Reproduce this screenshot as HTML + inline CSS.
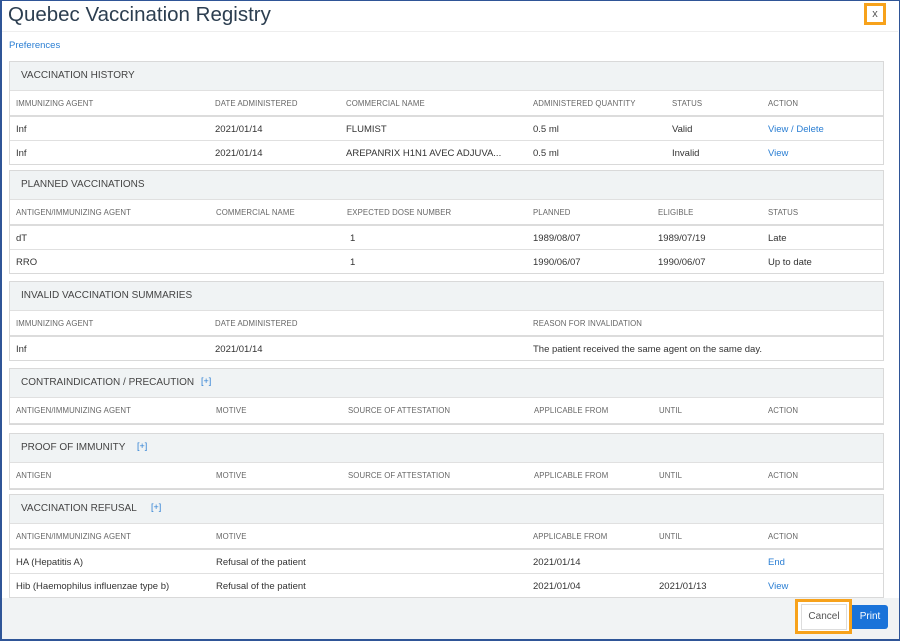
<!DOCTYPE html>
<html><head><meta charset="utf-8"><style>
*{margin:0;padding:0;box-sizing:border-box}
body{width:900px;height:641px;overflow:hidden;background:#fff;font-family:"Liberation Sans",Arial,sans-serif;position:relative;color:#333}
.frame{position:absolute;left:0;top:0;width:900px;height:641px;border:2px solid #2f5597;border-right-width:1px;border-top-width:1px}
.t{position:absolute;white-space:nowrap}
.title{left:8px;top:3px;font-size:20.5px;color:#2c3e50}
.hl{position:absolute;left:2px;right:2px;top:31px;height:1px;background:#eee}
.pref{left:9px;top:40px;font-size:9.5px;color:#2a7ed3}
.x{position:absolute;left:864px;top:3px;width:22px;height:22px;border:3px solid #f7a21b;font-size:11px;color:#555;text-align:center;line-height:16px}
.sec{position:absolute;left:9px;width:875px;border:1px solid #d9d9d9}
.sh{position:absolute;left:0;right:0;top:0;height:29px;background:#f0f3f4;border-bottom:1px solid #e0e0e0}
.sh span{position:absolute;left:11px;top:8px;font-size:10px;color:#444}
.sh b{position:absolute;top:7px;font-weight:normal;font-size:9px;color:#2a7ed3}
.row{position:absolute;left:0;right:0;border-bottom:1px solid #e0e0e0}
.ch{height:26px;border-bottom:2px solid #dcdcdc}
.row span{position:absolute;top:7px;font-size:9.5px;color:#333;white-space:nowrap}
.ch span{top:8px;font-size:7.8px;color:#666;letter-spacing:.1px}
.a{color:#2a7ed3!important}
.foot{position:absolute;left:2px;right:1px;top:598px;height:42px;background:#f1f3f4}
.cancel{position:absolute;left:795px;top:599px;width:57px;height:35px;border:3px solid #f7a21b;background:#fff}
.cancel div{position:absolute;left:3px;top:2px;width:46px;height:26px;border:1px solid #ddd;background:#fff;font-size:10px;color:#555;text-align:center;line-height:24px}
.print{position:absolute;left:852px;top:605px;width:36px;height:24px;background:#1a73d9;color:#fff;font-size:10px;text-align:center;line-height:24px;border-radius:0 3px 3px 0}
</style></head><body>
<div class="t title">Quebec Vaccination Registry</div>
<div class="hl"></div>
<div class="x">x</div>
<div class="t pref">Preferences</div>

<div class="sec" style="top:61px;height:104px">
<div class="sh"><span>VACCINATION HISTORY</span></div>
<div class="row ch" style="top:29px"><span style="left:6px">IMMUNIZING AGENT</span><span style="left:205px">DATE ADMINISTERED</span><span style="left:336px">COMMERCIAL NAME</span><span style="left:523px">ADMINISTERED QUANTITY</span><span style="left:662px">STATUS</span><span style="left:758px">ACTION</span></div>
<div class="row" style="top:55px;height:24px"><span style="left:6px">Inf</span><span style="left:205px">2021/01/14</span><span style="left:336px">FLUMIST</span><span style="left:523px">0.5 ml</span><span style="left:662px">Valid</span><span style="left:758px" class="a">View / Delete</span></div>
<div class="row" style="top:79px;height:24px;border:0"><span style="left:6px">Inf</span><span style="left:205px">2021/01/14</span><span style="left:336px">AREPANRIX H1N1 AVEC ADJUVA...</span><span style="left:523px">0.5 ml</span><span style="left:662px">Invalid</span><span style="left:758px" class="a">View</span></div>
</div>

<div class="sec" style="top:170px;height:104px">
<div class="sh"><span>PLANNED VACCINATIONS</span></div>
<div class="row ch" style="top:29px"><span style="left:6px">ANTIGEN/IMMUNIZING AGENT</span><span style="left:206px">COMMERCIAL NAME</span><span style="left:337px">EXPECTED DOSE NUMBER</span><span style="left:523px">PLANNED</span><span style="left:648px">ELIGIBLE</span><span style="left:758px">STATUS</span></div>
<div class="row" style="top:55px;height:24px"><span style="left:6px">dT</span><span style="left:340px">1</span><span style="left:523px">1989/08/07</span><span style="left:648px">1989/07/19</span><span style="left:758px">Late</span></div>
<div class="row" style="top:79px;height:24px;border:0"><span style="left:6px">RRO</span><span style="left:340px">1</span><span style="left:523px">1990/06/07</span><span style="left:648px">1990/06/07</span><span style="left:758px">Up to date</span></div>
</div>

<div class="sec" style="top:281px;height:80px">
<div class="sh"><span>INVALID VACCINATION SUMMARIES</span></div>
<div class="row ch" style="top:29px"><span style="left:6px">IMMUNIZING AGENT</span><span style="left:205px">DATE ADMINISTERED</span><span style="left:523px">REASON FOR INVALIDATION</span></div>
<div class="row" style="top:55px;height:24px;border:0"><span style="left:6px">Inf</span><span style="left:205px">2021/01/14</span><span style="left:523px">The patient received the same agent on the same day.</span></div>
</div>

<div class="sec" style="top:368px;height:57px">
<div class="sh"><span>CONTRAINDICATION / PRECAUTION</span><b style="left:191px">[+]</b></div>
<div class="row ch" style="top:29px;border-bottom:1px solid #dcdcdc"><span style="left:6px">ANTIGEN/IMMUNIZING AGENT</span><span style="left:206px">MOTIVE</span><span style="left:338px">SOURCE OF ATTESTATION</span><span style="left:524px">APPLICABLE FROM</span><span style="left:649px">UNTIL</span><span style="left:758px">ACTION</span></div>
</div>

<div class="sec" style="top:433px;height:57px">
<div class="sh"><span>PROOF OF IMMUNITY</span><b style="left:127px">[+]</b></div>
<div class="row ch" style="top:29px;border-bottom:1px solid #dcdcdc"><span style="left:6px">ANTIGEN</span><span style="left:206px">MOTIVE</span><span style="left:338px">SOURCE OF ATTESTATION</span><span style="left:524px">APPLICABLE FROM</span><span style="left:649px">UNTIL</span><span style="left:758px">ACTION</span></div>
</div>

<div class="sec" style="top:494px;height:104px">
<div class="sh"><span>VACCINATION REFUSAL</span><b style="left:141px">[+]</b></div>
<div class="row ch" style="top:29px"><span style="left:6px">ANTIGEN/IMMUNIZING AGENT</span><span style="left:206px">MOTIVE</span><span style="left:523px">APPLICABLE FROM</span><span style="left:649px">UNTIL</span><span style="left:758px">ACTION</span></div>
<div class="row" style="top:55px;height:24px"><span style="left:6px">HA (Hepatitis A)</span><span style="left:206px">Refusal of the patient</span><span style="left:523px">2021/01/14</span><span style="left:758px" class="a">End</span></div>
<div class="row" style="top:79px;height:24px;border:0"><span style="left:6px">Hib (Haemophilus influenzae type b)</span><span style="left:206px">Refusal of the patient</span><span style="left:523px">2021/01/04</span><span style="left:649px">2021/01/13</span><span style="left:758px" class="a">View</span></div>
</div>

<div class="foot"></div>
<div class="cancel"><div>Cancel</div></div>
<div class="print">Print</div>
<div class="frame"></div>
</body></html>
